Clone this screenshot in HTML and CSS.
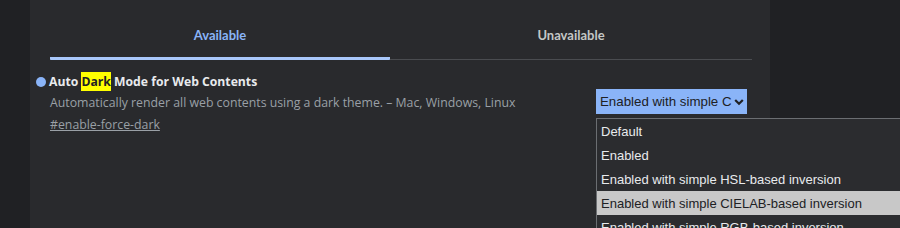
FILE: index.html
```html
<!DOCTYPE html>
<html lang="en">
<head>
    <meta charset="UTF-8">
    <title>Experiments</title>
    <link rel="stylesheet" href="styles.css">
</head>
<body>
    <div class="page">
        <div class="tabs">
            <div class="tab active">Available</div>
            <div class="tab">Unavailable</div>
        </div>

        <div class="experiment">
            <div class="experiment-text">
                <h3 class="experiment-name"><span class="dot"></span>Auto <mark>Dark</mark> Mode for Web Contents</h3>
                <p class="description">Automatically render all web contents using a dark theme. – Mac, Windows, Linux</p>
                <a class="permalink" href="#enable-force-dark">#enable-force-dark</a>
            </div>
            <div class="experiment-actions">
                <div class="select-box">
                    <span>Enabled with simple C</span>
                    <svg class="chevron" width="10" height="8" viewBox="0 0 10 8">
                        <path d="M1.2 2 L5 5.8 L8.8 2" fill="none" stroke="#202124" stroke-width="2.2"/>
                    </svg>
                </div>
            </div>
        </div>
    </div>

    <ul class="dropdown">
        <li>Default</li>
        <li>Enabled</li>
        <li>Enabled with simple HSL-based inversion</li>
        <li class="hover">Enabled with simple CIELAB-based inversion</li>
        <li>Enabled with simple RGB-based inversion</li>
    </ul>
</body>
</html>
```

FILE: styles.css
```css
:root {
    --page-bg: #202124;
    --panel-bg: #292a2d;
    --blue: #8ab4f8;
    --text: #e8eaed;
    --muted: #9aa0a6;
}

* {
    margin: 0;
    padding: 0;
    box-sizing: border-box;
}

body {
    background-color: var(--page-bg);
    height: 228px;
    overflow: hidden;
    font-family: "Open Sans", "Noto Sans", sans-serif;
}

.page {
    margin-left: 30px;
    width: 740px;
    height: 228px;
    background-color: var(--panel-bg);
    padding: 0 18px 0 20px;
}

.tabs {
    display: flex;
    height: 60px;
    border-bottom: 1px solid #4a4c50;
}

.tab {
    flex: 1;
    padding-top: 27px;
    text-align: center;
    font-family: Lato, sans-serif;
    font-weight: 700;
    font-size: 13px;
    color: #c4c7c5;
}

.tab.active {
    flex: 0 0 340px;
    color: var(--blue);
    border-bottom: 3px solid #a8c7fa;
    border-radius: 0 0 1px 1px;
    margin-bottom: -1px;
}

.experiment {
    display: flex;
    justify-content: space-between;
    padding-top: 13px;
}

.experiment-name {
    margin-left: -14px;
    font-size: 12.2px;
    font-weight: 700;
    color: var(--text);
    line-height: 18px;
}

.dot {
    display: inline-block;
    width: 10px;
    height: 10px;
    border-radius: 50%;
    background-color: var(--blue);
    margin-right: 3px;
    vertical-align: -1px;
}

mark {
    background-color: #ffff00;
    color: #202124;
    padding: 1px 0;
}

.description {
    margin-top: 3px;
    font-size: 12.3px;
    line-height: 18px;
    color: var(--muted);
}

.permalink {
    display: inline-block;
    margin-top: 2px;
    font-size: 12.3px;
    line-height: 18px;
    color: var(--muted);
}

.experiment-actions {
    padding-top: 16px;
    padding-right: 5px;
}

.select-box {
    display: flex;
    align-items: center;
    width: 151px;
    height: 25px;
    padding-left: 4px;
    background-color: var(--blue);
    color: #202124;
    font-family: "Liberation Sans", Arial, sans-serif;
    font-size: 13.3px;
}

.chevron {
    margin-left: 2px;
}

.dropdown {
    position: absolute;
    left: 596px;
    top: 118px;
    width: 320px;
    list-style: none;
    background-color: #2b2c2f;
    border: 1px solid #6b6e72;
    font-family: "Liberation Sans", Arial, sans-serif;
    font-size: 13px;
    color: var(--text);
}

.dropdown li {
    height: 24px;
    line-height: 25px;
    padding-left: 4px;
}

.dropdown li.hover {
    background-color: #c8c8c8;
    color: #202124;
}
```
